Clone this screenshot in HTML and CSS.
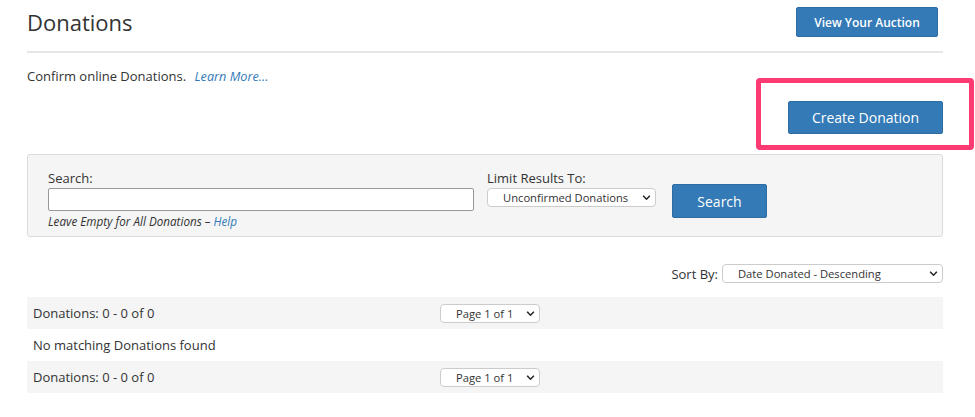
FILE: index.html
```html
<!DOCTYPE html>
<html lang="en">
<head>
    <meta charset="UTF-8">
    <meta name="viewport" content="width=device-width, initial-scale=1.0">
    <title>Donations</title>
    <link rel="stylesheet" href="styles.css">
</head>
<body>

    <div class="page">
        <div class="header">
            <h1>Donations</h1>
            <button class="btn btn-small">View Your Auction</button>
        </div>

        <p class="intro">Confirm online Donations. <a href="#" class="learn">Learn More...</a></p>

        <div class="actions">
            <button class="btn btn-create">Create Donation</button>
            <div class="highlight"></div>
        </div>

        <div class="search-panel">
            <div class="field field-search">
                <label for="search">Search:</label>
                <input type="text" id="search">
                <div class="hint">Leave Empty for All Donations &ndash; <a href="#">Help</a></div>
            </div>
            <div class="field field-limit">
                <label for="limit">Limit Results To:</label>
                <span class="select-wrap limit-select">
                    <select id="limit">
                        <option>Unconfirmed Donations</option>
                    </select>
                    <svg class="chevron" viewBox="0 0 10 6"><path d="M1 1l4 4 4-4" /></svg>
                </span>
            </div>
            <button class="btn btn-search">Search</button>
        </div>

        <div class="sort-row">
            <label for="sort">Sort By:</label>
            <span class="select-wrap sort-select">
                <select id="sort">
                    <option>Date Donated - Descending</option>
                </select>
                <svg class="chevron" viewBox="0 0 10 6"><path d="M1 1l4 4 4-4" /></svg>
            </span>
        </div>

        <div class="results">
            <div class="row row-shaded">
                <div class="count">Donations: 0 - 0 of 0</div>
                <span class="select-wrap page-select">
                    <select>
                        <option>Page 1 of 1</option>
                    </select>
                    <svg class="chevron" viewBox="0 0 10 6"><path d="M1 1l4 4 4-4" /></svg>
                </span>
            </div>
            <div class="row">
                <div class="count">No matching Donations found</div>
            </div>
            <div class="row row-shaded">
                <div class="count">Donations: 0 - 0 of 0</div>
                <span class="select-wrap page-select">
                    <select>
                        <option>Page 1 of 1</option>
                    </select>
                    <svg class="chevron" viewBox="0 0 10 6"><path d="M1 1l4 4 4-4" /></svg>
                </span>
            </div>
        </div>
    </div>

</body>
</html>
```

FILE: styles.css
```css
body {
    font-family: "Open Sans", Arial, sans-serif;
    font-size: 13px;
    color: #333;
    background-color: #fff;
    margin: 0;
}
a {
    color: #337ab7;
    text-decoration: none;
}
.page {
    width: 916px;
    margin-left: 27px;
}
.header {
    display: flex;
    justify-content: space-between;
    align-items: flex-start;
    height: 51px;
    border-bottom: 2px solid #e6e6e6;
}
h1 {
    margin: 7px 0 0;
    font-size: 22px;
    font-weight: 400;
    line-height: 30px;
    color: #333;
}
.btn {
    font-family: "Open Sans", Arial, sans-serif;
    background-color: #337ab7;
    color: #fff;
    border: 1px solid #2e6da4;
    border-radius: 2px;
    cursor: pointer;
}
.btn-small {
    margin: 7px 5px 0 0;
    width: 142px;
    height: 30px;
    font-size: 12px;
    font-weight: 600;
}
.intro {
    margin: 14px 0 0;
    line-height: 18px;
}
.learn {
    font-style: italic;
    font-size: 12.7px;
    margin-left: 5px;
}
.actions {
    position: relative;
    display: flex;
    justify-content: flex-end;
    margin-top: 16px;
}
.btn-create {
    width: 155px;
    height: 33px;
    font-size: 14px;
}
.highlight {
    position: absolute;
    left: 729px;
    top: -23px;
    width: 208px;
    height: 62px;
    border: 5px solid #fd3a72;
    border-radius: 4px;
}
.search-panel {
    display: flex;
    align-items: flex-start;
    margin-top: 20px;
    height: 81px;
    padding: 0 20px;
    background-color: #f5f5f5;
    border: 1px solid #dcdcdc;
    border-radius: 3px;
}
.field label {
    display: block;
    margin-top: 13px;
    line-height: 20px;
}
.field-search input {
    display: block;
    width: 426px;
    height: 23px;
    box-sizing: border-box;
    margin: 0;
    border: 1px solid #999;
    border-radius: 2px;
    background: #fff;
}
.hint {
    margin-top: 3px;
    font-size: 11.7px;
    font-style: italic;
    line-height: 15px;
}
.field-limit {
    margin-left: 13px;
}
.select-wrap {
    position: relative;
    display: inline-block;
    vertical-align: top;
}
.select-wrap select {
    appearance: none;
    -webkit-appearance: none;
    display: block;
    box-sizing: border-box;
    height: 19px;
    margin: 0;
    padding: 0 0 0 15px;
    font-family: "Open Sans", Arial, sans-serif;
    font-size: 11.2px;
    color: #333;
    background: #fff;
    border: 1px solid #ccc;
    border-radius: 4px;
}
.chevron {
    position: absolute;
    right: 5px;
    top: 7px;
    width: 9px;
    height: 5px;
    fill: none;
    stroke: #222;
    stroke-width: 1.8;
}
.limit-select select {
    width: 169px;
}
.btn-search {
    margin: 29px 0 0 16px;
    width: 95px;
    height: 34px;
    font-size: 14px;
}
.sort-row {
    display: flex;
    justify-content: flex-end;
    align-items: center;
    margin-top: 27px;
}
.sort-row label {
    margin-right: 4px;
}
.sort-select select {
    width: 221px;
}
.results {
    margin-top: 14px;
}
.row {
    display: flex;
    align-items: center;
    height: 32px;
    padding-left: 6px;
}
.row-shaded {
    background-color: #f5f5f5;
}
.count {
    width: 407px;
}
.page-select select {
    width: 100px;
}
```
